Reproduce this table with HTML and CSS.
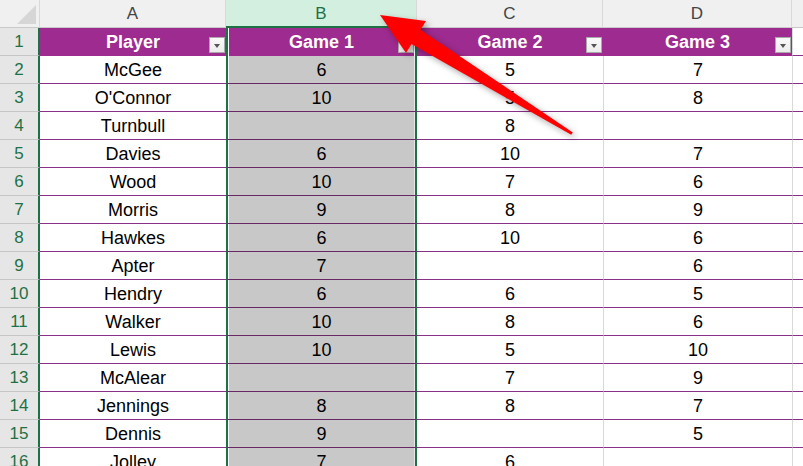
FILE: index.html
```html
<!DOCTYPE html>
<html>
<head>
<meta charset="utf-8">
<link rel="stylesheet" href="styles.css">
</head>
<body>
<div class="sheet">
  <div class="corner"><svg width="38" height="27" viewBox="0 0 38 27"><polygon points="17,24 36,5 36,24" fill="#d6d6d6"/></svg></div>
  <div class="ch">A</div>
  <div class="ch sel">B</div>
  <div class="ch">C</div>
  <div class="ch">D</div>
  <div class="ch e"></div>

  <div class="rh">1</div>
  <div class="th">Player<span class="fb"></span></div>
  <div class="th b">Game 1<span class="fb"></span></div>
  <div class="th">Game 2<span class="fb"></span></div>
  <div class="th">Game 3<span class="fb"></span></div>
  <div class="c e top"></div>

  <div class="rh">2</div><div class="c">McGee</div><div class="c b">6</div><div class="c">5</div><div class="c d">7</div><div class="c e"></div>
  <div class="rh">3</div><div class="c">O'Connor</div><div class="c b">10</div><div class="c">5</div><div class="c d">8</div><div class="c e"></div>
  <div class="rh">4</div><div class="c">Turnbull</div><div class="c b"></div><div class="c">8</div><div class="c d"></div><div class="c e"></div>
  <div class="rh">5</div><div class="c">Davies</div><div class="c b">6</div><div class="c">10</div><div class="c d">7</div><div class="c e"></div>
  <div class="rh">6</div><div class="c">Wood</div><div class="c b">10</div><div class="c">7</div><div class="c d">6</div><div class="c e"></div>
  <div class="rh">7</div><div class="c">Morris</div><div class="c b">9</div><div class="c">8</div><div class="c d">9</div><div class="c e"></div>
  <div class="rh">8</div><div class="c">Hawkes</div><div class="c b">6</div><div class="c">10</div><div class="c d">6</div><div class="c e"></div>
  <div class="rh">9</div><div class="c">Apter</div><div class="c b">7</div><div class="c"></div><div class="c d">6</div><div class="c e"></div>
  <div class="rh">10</div><div class="c">Hendry</div><div class="c b">6</div><div class="c">6</div><div class="c d">5</div><div class="c e"></div>
  <div class="rh">11</div><div class="c">Walker</div><div class="c b">10</div><div class="c">8</div><div class="c d">6</div><div class="c e"></div>
  <div class="rh">12</div><div class="c">Lewis</div><div class="c b">10</div><div class="c">5</div><div class="c d">10</div><div class="c e"></div>
  <div class="rh">13</div><div class="c">McAlear</div><div class="c b"></div><div class="c">7</div><div class="c d">9</div><div class="c e"></div>
  <div class="rh">14</div><div class="c">Jennings</div><div class="c b">8</div><div class="c">8</div><div class="c d">7</div><div class="c e"></div>
  <div class="rh">15</div><div class="c">Dennis</div><div class="c b">9</div><div class="c"></div><div class="c d">5</div><div class="c e"></div>
  <div class="rh">16</div><div class="c">Jolley</div><div class="c b">7</div><div class="c">6</div><div class="c d"></div><div class="c e"></div>
</div>

<svg class="arrow" width="803" height="466" viewBox="0 0 803 466">
  <polygon points="380,15 426,21 420.5,29.8 572.8,132.5 571.2,134.8 411.5,44 406,53" fill="#ff0000"/>
</svg>
</body>
</html>
```

FILE: styles.css
```css
html, body {
  margin: 0;
  padding: 0;
  background: #ffffff;
  overflow: hidden;
}

body {
  font-family: "Liberation Sans", Arial, sans-serif;
  width: 803px;
  height: 466px;
  position: relative;
}

.sheet {
  display: grid;
  grid-template-columns: 40px 186px 191px 186px 189px 1fr;
  grid-auto-rows: 28px;
  height: 466px;
  overflow: hidden;
}

.sheet > div {
  box-sizing: border-box;
  display: flex;
  align-items: center;
  justify-content: center;
  min-width: 0;
  padding-top: 1px;
}

.corner {
  background: #f0f0f0;
  border-bottom: 1px solid #c9c9c9;
  border-right: 1px solid #d9d9d9;
  align-items: flex-start !important;
  justify-content: flex-start !important;
  padding-top: 0 !important;
}

.ch {
  background: #f0f0f0;
  border-bottom: 1px solid #c9c9c9;
  border-right: 1px solid #d9d9d9;
  color: #444444;
  font-size: 17px;
}

.ch.sel {
  background: #d3efdf;
  color: #1e7145;
  border-bottom: 2px solid #1e7145;
}

.ch.e {
  border-right: none;
}

.rh {
  background: #e6e6e6;
  color: #1e7145;
  font-size: 17px;
  border-right: 2px solid #1e7145;
  border-bottom: 1px solid #c6c6c6;
}

.th {
  position: relative;
  background: #9e2b8f;
  color: #ffffff;
  font-weight: bold;
  font-size: 18px;
}

.th.b {
  border-left: 2px solid #1e7145;
  border-right: 2px solid #1e7145;
  box-shadow: inset 1px 0 0 #ffffff, inset -1px 0 0 #ffffff;
}

.fb {
  position: absolute;
  right: 1px;
  top: 9px;
  width: 16px;
  height: 16px;
  box-sizing: border-box;
  background: linear-gradient(#fafafa, #ececec);
  border: 1px solid #a9a9a9;
}

.fb::after {
  content: "";
  position: absolute;
  left: 4px;
  top: 6px;
  border-left: 3.5px solid transparent;
  border-right: 3.5px solid transparent;
  border-top: 4px solid #555555;
}

.c {
  color: #000000;
  font-size: 18px;
  border-bottom: 1px solid #8b3089;
  background: #ffffff;
}

.c.top {
  border-bottom: 1px solid #8b3089;
}

.c.b {
  background: #c8c8c8;
  border-bottom-color: #6a2765;
  border-left: 2px solid #1e7145;
  border-right: 2px solid #1e7145;
  box-shadow: inset 1px 0 0 #ffffff, inset -1px 0 0 #e6e6e6;
}

.c.d {
  border-left: 1px solid #d9d9d9;
}

.c.e {
  border-left: 1px solid #d9d9d9;
}

.arrow {
  position: absolute;
  left: 0;
  top: 0;
  pointer-events: none;
  filter: drop-shadow(3px 3px 3px rgba(0, 0, 0, 0.35));
}
```
